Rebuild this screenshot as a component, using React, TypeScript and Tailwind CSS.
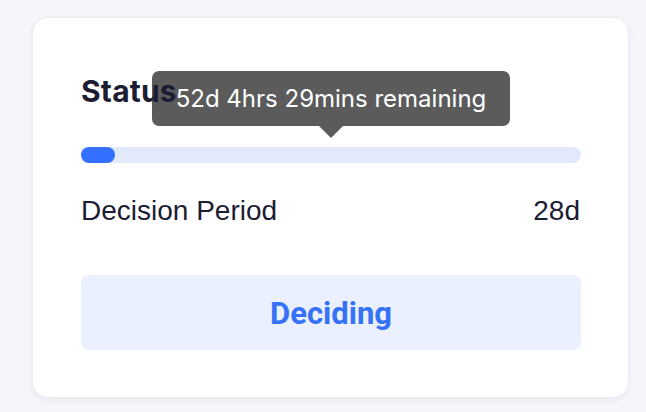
import React from "react";

export default function App() {
  return (
    <div className="w-[646px] h-[412px] bg-[#f5f6fa] pt-[17px] pl-[32px] overflow-hidden" style={{ fontFamily: "Inter, 'Noto Sans', sans-serif" }}>
      <div className="w-[597px] h-[381px] bg-white rounded-[16px] border border-[#ececf3] shadow-[0_2px_6px_rgba(30,40,80,0.06)] px-[48px] pt-[55px]">
        <div className="relative z-10 w-fit text-[30px] leading-[36px] font-bold text-[#1c1d33] tracking-[0.2px]">Status</div>
        <div className="relative mt-[38px] h-[16px] w-[500px] rounded-full bg-[#e2e9fa]">
          <div className="h-[16px] w-[34px] rounded-full bg-[#3370ff]" />
          <div className="absolute left-1/2 -translate-x-1/2 bottom-[37px] w-[358px] h-[55px] rounded-[7px] bg-[#5b5b5b] text-white text-[24px] leading-[56px] text-center whitespace-nowrap">
            52d 4hrs 29mins remaining
          </div>
          <svg className="absolute left-[238px] bottom-[25px]" width="24" height="12" viewBox="0 0 24 12">
            <polygon points="0,0 24,0 12,12" fill="#5b5b5b" />
          </svg>
        </div>
        <div className="mt-[32px] flex justify-between items-center text-[28px] leading-[32px] text-[#1c1d33]" style={{ fontFamily: "'Liberation Sans', Arial, sans-serif" }}>
          <span>Decision Period</span>
          <span>28d</span>
        </div>
        <div className="mt-[48px] h-[75px] w-[500px] rounded-[8px] bg-[#eaf0fd] flex items-center justify-center pt-[3px]">
          <span className="text-[31px] font-bold text-[#3672f8]" style={{ fontFamily: "Roboto, sans-serif" }}>Deciding</span>
        </div>
      </div>
    </div>
  );
}
